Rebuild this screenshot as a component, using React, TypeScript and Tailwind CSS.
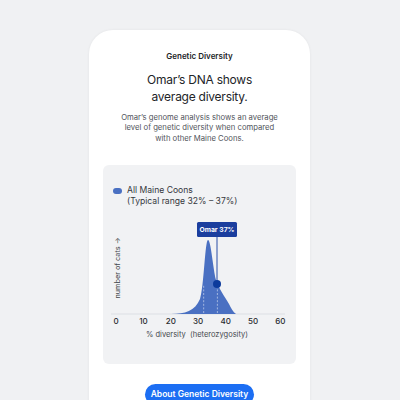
const ticks = [0, 10, 20, 30, 40, 50, 60];
const px = (v: number) => 13 + v * 2.74;

function DiversityChart() {
  return (
    <svg width="193" height="157" viewBox="0 0 193 157" className="block">
      <line x1="8" y1="107" x2="182" y2="107" stroke="#dcdfe4" strokeWidth="1" />
      <path
        d="M 68 107 C 82 107, 92 104, 97 92 C 101 80, 102 33, 105 33 C 108 33, 110 62, 113 73 C 116 82, 122 90, 126 97 C 128 101, 130 105, 133 107 Z"
        fill="#4a70c2"
      />
      <line x1={px(32)} y1="106" x2={px(32)} y2="78" stroke="#ffffff" strokeOpacity="0.7" strokeWidth="0.7" strokeDasharray="2 1.6" />
      <line x1={px(37)} y1="106" x2={px(37)} y2="80" stroke="#ffffff" strokeOpacity="0.7" strokeWidth="0.7" strokeDasharray="2 1.6" />
      <line x1="114" y1="30" x2="114" y2="77" stroke="#2a4ea6" strokeWidth="1" />
      <circle cx="114" cy="77" r="4" fill="#0c3a9c" />
      <rect x="94" y="15" width="40" height="15" rx="1.5" fill="#1b3e9e" />
      <text x="114" y="25" textAnchor="middle" fill="#ffffff" fontSize="6.8" fontWeight="700">
        Omar 37%
      </text>
      {ticks.map((t) => (
        <text key={t} x={px(t)} y="117" textAnchor="middle" fill="#2a2c30" fontSize="8" fontWeight="500">
          {t}
        </text>
      ))}
      <text x="94" y="130" textAnchor="middle" fill="#45484e" fontSize="7.5" xmlSpace="preserve">
        % diversity  (heterozygosity)
      </text>
      <text x="14" y="61" textAnchor="middle" fill="#45484e" fontSize="7.3" transform="rotate(-90 14 61)" dy="2.5">
        number of cats →
      </text>
    </svg>
  );
}

export default function App() {
  return (
    <div className="w-[400px] h-[400px] overflow-hidden bg-[#f0f1f3] pt-[30px] pl-[89px] font-['Inter','Noto_Sans',sans-serif]">
      <div className="w-[221px] h-[380px] rounded-t-[24px] bg-white shadow-[0_0_3px_rgba(0,0,0,0.06)] flex flex-col items-center pt-[21px]">
        <div className="text-[8px] leading-[10px] font-semibold text-[#222428]">Genetic Diversity</div>
        <h1 className="mt-[9.5px] text-[12px] leading-[17px] tracking-[-0.25px] text-[#222428] text-center">
          Omar’s DNA shows
          <br />
          average diversity.
        </h1>
        <p className="mt-[8px] text-[7.7px] leading-[10.5px] text-[#50535a] text-center">
          Omar’s genome analysis shows an average
          <br />
          level of genetic diversity when compared
          <br />
          with other Maine Coons.
        </p>
        <div className="mt-[21px] w-[193px] h-[199px] rounded-[6px] bg-[#f1f2f4] flex flex-col pt-[19.5px]">
          <div className="flex pl-[10px] gap-[5px]">
            <span className="mt-[3px] w-[9px] h-[6px] rounded-full bg-[#4a70c2]" />
            <div className="text-[8.6px] leading-[11px] text-[#35373c]">
              All Maine Coons
              <br />
              (Typical range 32% – 37%)
            </div>
          </div>
          <DiversityChart />
        </div>
        <button className="mt-[20px] w-[109px] h-[21px] leading-[21px] rounded-full bg-[#1c6ef3] text-white text-[8.5px] font-semibold">
          About Genetic Diversity
        </button>
      </div>
    </div>
  );
}
